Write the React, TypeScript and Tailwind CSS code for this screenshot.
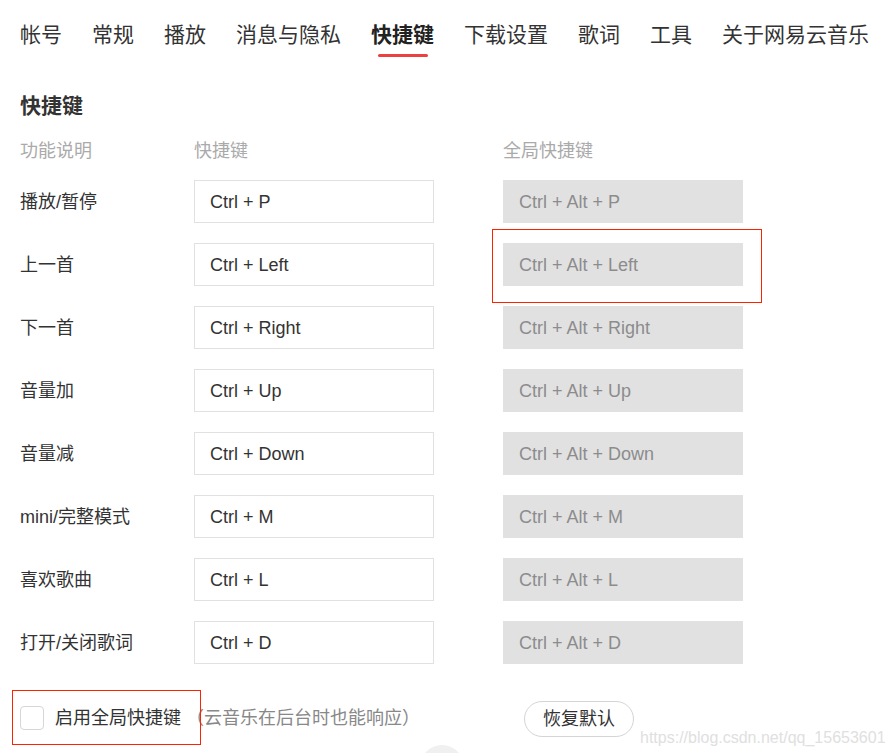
import React from 'react';

const tabs = ['帐号', '常规', '播放', '消息与隐私', '快捷键', '下载设置', '歌词', '工具', '关于网易云音乐'];

const shortcuts = [
  { name: '播放/暂停', key: 'Ctrl + P', global: 'Ctrl + Alt + P' },
  { name: '上一首', key: 'Ctrl + Left', global: 'Ctrl + Alt + Left' },
  { name: '下一首', key: 'Ctrl + Right', global: 'Ctrl + Alt + Right' },
  { name: '音量加', key: 'Ctrl + Up', global: 'Ctrl + Alt + Up' },
  { name: '音量减', key: 'Ctrl + Down', global: 'Ctrl + Alt + Down' },
  { name: 'mini/完整模式', key: 'Ctrl + M', global: 'Ctrl + Alt + M' },
  { name: '喜欢歌曲', key: 'Ctrl + L', global: 'Ctrl + Alt + L' },
  { name: '打开/关闭歌词', key: 'Ctrl + D', global: 'Ctrl + Alt + D' },
];

const font = { fontFamily: '"Liberation Sans", "Noto Sans CJK SC", sans-serif' };

export default function App() {
  return (
    <div className="relative w-[891px] h-[753px] overflow-hidden bg-white text-[#333]" style={font}>
      {/* Tabs */}
      <div className="flex gap-[30px] pl-[20px] pt-[21px]">
        {tabs.map((tab) => (
          <div key={tab} className="flex flex-col items-center">
            <span className={`text-[21px] leading-[28px] whitespace-nowrap ${tab === '快捷键' ? 'font-bold text-[#222]' : 'text-[#333]'}`}>
              {tab}
            </span>
            {tab === '快捷键' ? (
              <span className="mt-[5px] h-[3px] w-[50px] rounded-full bg-[#ec4141]" />
            ) : (
              <span className="mt-[5px] h-[3px]" />
            )}
          </div>
        ))}
      </div>

      <div className="h-[729px] overflow-hidden">
        <div className="pl-[20px]">
          <h2 className="mt-[35px] text-[21px] leading-[28px] font-bold text-[#333]">快捷键</h2>

          {/* Column headers */}
          <div className="mt-[19px] flex text-[18px] leading-[24px] text-[#aaa]">
            <div className="w-[174px]">功能说明</div>
            <div className="w-[309px]">快捷键</div>
            <div>全局快捷键</div>
          </div>

          {/* Rows */}
          <div className="mt-[17px] flex flex-col gap-[20px]">
            {shortcuts.map((s) => (
              <div key={s.name} className="flex items-center h-[43px]">
                <div className="w-[174px] pt-[2px] text-[18px] text-[#333]">{s.name}</div>
                <div className="w-[240px] h-[43px] border border-[#e1e1e1] flex items-center pl-[15px] pt-[1px] text-[18px] text-[#333]">
                  {s.key}
                </div>
                <div className="ml-[69px] w-[240px] h-[43px] bg-[#e1e1e2] flex items-center pl-[16px] pt-[1px] text-[18px] text-[#8c8c8c]">
                  {s.global}
                </div>
              </div>
            ))}
          </div>

          {/* Bottom row */}
          <div className="mt-[37px] flex items-start">
            <div className="mt-[5px] w-[24px] h-[24px] rounded-[4px] border border-[#d6d6d6]" />
            <span className="ml-[11px] mt-[4px] text-[18px] leading-[26px] text-[#333]">启用全局快捷键</span>
            <span className="ml-[5px] mt-[4px] text-[18px] leading-[26px] text-[#888]">（云音乐在后台时也能响应）</span>
            <button className="ml-[104px] w-[110px] h-[36px] rounded-full border border-[#d4d4d4] text-[18px] text-[#333] bg-white">
              恢复默认
            </button>
          </div>
        </div>
      </div>

      <div className="border-t border-[#dedede]" />

      {/* faint circle below the divider */}
      <div className="absolute left-[420px] top-[745px] w-[44px] h-[44px] rounded-full bg-[#f0f0f0]" />

      {/* watermark */}
      <div className="absolute left-[640px] top-[726px] text-[16px] leading-[24px] text-[#e0e0e0] whitespace-nowrap">
        https://blog.csdn.net/qq_15653601
      </div>

      {/* annotation boxes */}
      <div className="absolute left-[492px] top-[229px] w-[270px] h-[74px] border border-[#ff2200]" />
      <div className="absolute left-[12px] top-[690px] w-[189px] h-[55px] border border-[#ff2200]" />
    </div>
  );
}
